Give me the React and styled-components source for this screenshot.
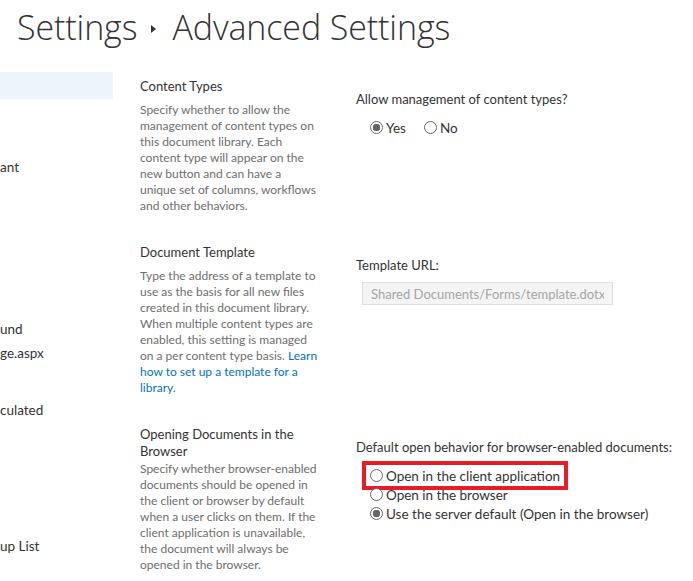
import React from "react";
import styled, { createGlobalStyle } from "styled-components";

const GlobalStyle = createGlobalStyle`
	html, body {
		margin: 0;
		padding: 0;
		background: #fff;
		font-family: Lato, "Open Sans", sans-serif;
		color: #333;
	}
`;

const navItems = [
	{ text: "", active: true, gap: 0 },
	{ text: "ant", gap: 58 },
	{ text: "und", gap: 142 },
	{ text: "ge.aspx", gap: 4 },
	{ text: "culated", gap: 37 },
	{ text: "up List", gap: 116 },
];

export default function App(){
	return (
		<Page>
			<GlobalStyle />
			<Header>
				<Crumb>Settings</Crumb>
				<Arrow />
				<Crumb>Advanced Settings</Crumb>
			</Header>
			<Main>
				<Nav>
					{navItems.map((item, i) => (
						<NavItem key={i} $active={item.active} $gap={item.gap}>{item.text}</NavItem>
					))}
				</Nav>
				<Sections>
					<Section>
						<Info>
							<SectionTitle>Content Types</SectionTitle>
							<Description>
								Specify whether to allow the management of content types on this document library. Each content type will appear on the new button and can have a unique set of columns, workflows and other behaviors.
							</Description>
						</Info>
						<Control>
							<Label>Allow management of content types?</Label>
							<InlineRadios>
								<Radio checked label="Yes" />
								<Radio label="No" />
							</InlineRadios>
						</Control>
					</Section>
					<Section>
						<Info>
							<SectionTitle>Document Template</SectionTitle>
							<Description>
								Type the address of a template to use as the basis for all new files created in this document library. When multiple content types are enabled, this setting is managed on a per content type basis. <Link href="#">Learn how to set up a template for a library.</Link>
							</Description>
						</Info>
						<Control>
							<Label>Template URL:</Label>
							<UrlInput disabled value="Shared Documents/Forms/template.dotx" readOnly />
						</Control>
					</Section>
					<Section>
						<Info>
							<SectionTitle>Opening Documents in the Browser</SectionTitle>
							<Description $tight>
								Specify whether browser-enabled documents should be opened in<br />
								the client or browser by default when a user clicks on them. If the client application is unavailable, the document will always be opened in the browser.
							</Description>
						</Info>
						<Control>
							<Label>Default open behavior for browser-enabled documents:</Label>
							<StackRadios>
								<Radio label="Open in the client application" highlight />
								<Radio label="Open in the browser" />
								<Radio checked label="Use the server default (Open in the browser)" />
							</StackRadios>
						</Control>
					</Section>
				</Sections>
			</Main>
		</Page>
	);
}

function Radio({ label, checked, highlight }){
	return (
		<RadioRow $highlight={highlight}>
			<Circle $checked={checked} />
			<span>{label}</span>
		</RadioRow>
	);
}

const Page = styled.div`
	width: 693px;
	height: 581px;
	overflow: hidden;
`;

const Header = styled.h1`
	display: flex;
	align-items: center;
	margin: 0;
	padding: 0 0 0 17px;
	height: 54px;
	font-family: "Open Sans", sans-serif;
	font-weight: 300;
	font-size: 34px;
	color: #333;
	letter-spacing: -0.1px;
`;

const Crumb = styled.span`
	white-space: nowrap;
`;

const Arrow = styled.span`
	display: inline-block;
	width: 0;
	height: 0;
	margin: 4px 16px 0 14px;
	border-top: 4px solid transparent;
	border-bottom: 4px solid transparent;
	border-left: 5px solid #333;
`;

const Main = styled.div`
	display: grid;
	grid-template-columns: 113px 1fr;
	column-gap: 27px;
	margin-top: 18px;
`;

const Nav = styled.div`
	display: flex;
	flex-direction: column;
	font-size: 13.5px;
	color: #333;
`;

const NavItem = styled.div`
	margin-top: ${p => p.$gap}px;
	height: ${p => p.$active ? "27px" : "20px"};
	line-height: 20px;
	white-space: nowrap;
	background: ${p => p.$active ? "#eef4fb" : "transparent"};
`;

const Sections = styled.div`
	display: flex;
	flex-direction: column;
	gap: 24px;
`;

const Section = styled.div`
	display: grid;
	grid-template-columns: 179px 1fr;
	column-gap: 37px;
`;

const Info = styled.div`
	display: flex;
	flex-direction: column;
`;

const SectionTitle = styled.div`
	font-size: 13px;
	line-height: 17px;
	color: #333;
	padding-top: 6px;
`;

const Description = styled.div`
	margin-top: ${p => p.$tight ? "1px" : "7px"};
	font-size: 12px;
	line-height: 16px;
	color: #6e6e6e;
`;

const Link = styled.a`
	color: #0072c6;
	text-decoration: none;
`;

const Control = styled.div`
	display: flex;
	flex-direction: column;
	padding-top: 19px;
	font-size: 13.5px;
	color: #333;
`;

const Label = styled.div`
	font-size: 13px;
	line-height: 17px;
	white-space: nowrap;
`;

const InlineRadios = styled.div`
	display: flex;
	gap: 18px;
	margin-top: 10px;
	padding-left: 14px;
`;

const StackRadios = styled.div`
	display: flex;
	flex-direction: column;
	margin-top: 10px;
	padding-left: 14px;
`;

const RadioRow = styled.label`
	position: relative;
	display: flex;
	align-items: center;
	gap: 3px;
	height: 19px;
	white-space: nowrap;

	${p => p.$highlight && `
		&::after {
			content: "";
			position: absolute;
			left: -8px;
			top: -5px;
			width: 206px;
			height: 29px;
			border: 4px solid #e81c24;
			box-sizing: border-box;
			pointer-events: none;
		}
	`}
`;

const Circle = styled.span`
	box-sizing: border-box;
	width: 13px;
	height: 13px;
	border-radius: 50%;
	border: 1px solid #666;
	background: ${p => p.$checked ? "radial-gradient(circle, #666 0 3.5px, #fff 4px)" : "#fff"};
`;

const UrlInput = styled.input`
	box-sizing: border-box;
	width: 251px;
	height: 23px;
	margin: 8px 0 0 6px;
	padding: 0 8px;
	border: 1px solid #e1dfdd;
	background: #f4f4f4;
	color: #a6a6a6;
	font-family: Lato, sans-serif;
	font-size: 13px;
`;
